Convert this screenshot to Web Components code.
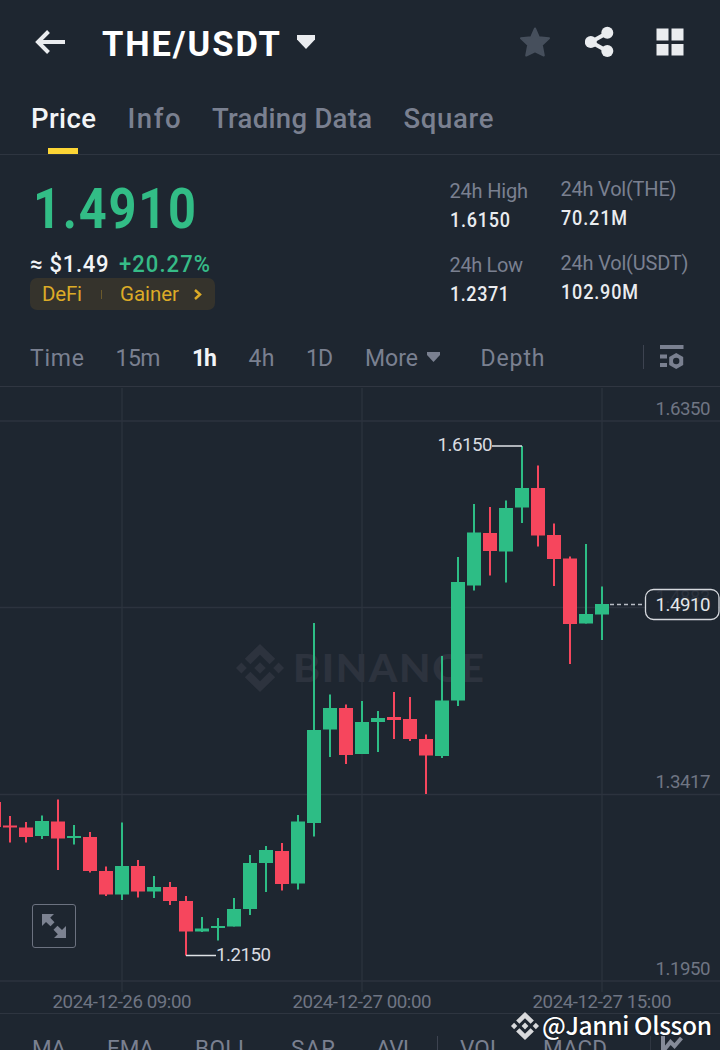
<!DOCTYPE html>
<html lang="en">
<head>
<meta charset="utf-8">
<title>THE/USDT</title>
<style>
    html, body {
        margin: 0;
        padding: 0;
        background: #1e2630;
    }
    body {
        width: 720px;
        height: 1050px;
        overflow: hidden;
        font-family: Roboto, "Liberation Sans", sans-serif;
        color: #7a8090;
    }
</style>
</head>
<body>
<market-page></market-page>

<script>
// a line of text tracked out (or in) to the given width,
// "squeeze" narrows (or widens) the letters themselves
class TrackedText extends HTMLElement {
    constructor() {
        super();
        this.shadowDOM = this.attachShadow({mode: "open"});
        this.shadowDOM.innerHTML = `
        <style>
         :host {
             display: block;
             flex: none;
             white-space: nowrap;
         }
         span {
             display: inline-block;
             transform-origin: 0 50%;
         }
        </style>
        <span><slot></slot></span>`;
    }

    connectedCallback() {
        const width = Number(this.getAttribute("width"));
        const squeeze = Number(this.getAttribute("squeeze") || 1);
        const span = this.shadowDOM.querySelector("span");
        const count = this.textContent.length;
        const natural = span.getBoundingClientRect().width;
        span.style.letterSpacing = `${(width / squeeze - natural) / (count - 1)}px`;
        if (squeeze !== 1) {
            span.style.transform = `scaleX(${squeeze})`;
        }
        this.style.width = `${width}px`;
    }
}

class BinanceLogo extends HTMLElement {
    constructor() {
        super();
        this.attachShadow({mode: "open"}).innerHTML = `
        <style>
         :host {
             display: block;
             flex: none;
         }
         svg {
             display: block;
             width: 100%;
             height: 100%;
         }
        </style>
        <svg viewBox="0 0 48 48" fill="currentColor">
            <path d="M24 0 39.2 14.7 33.6 20.2 24 10.7 14.4 20.2 8.8 14.7Z"/>
            <path d="M24 48 39.2 33.3 33.6 27.8 24 37.3 14.4 27.8 8.8 33.3Z"/>
            <path d="M5.4 18.6 10.8 24 5.4 29.4 0 24Z"/>
            <path d="M42.6 18.6 48 24 42.6 29.4 37.2 24Z"/>
            <path d="M24 18.2 29.8 24 24 29.8 18.2 24Z"/>
        </svg>`;
    }
}

class PairHeader extends HTMLElement {
    constructor() {
        super();
        this.attachShadow({mode: "open"}).innerHTML = `
        <style>
         :host {
             display: flex;
             align-items: center;
             box-sizing: border-box;
             height: 84px;
             padding: 0 36px 0 35px;
             color: #eaecef;
         }
         svg {
             display: block;
             flex: none;
         }
         .title {
             margin: 4px 17px 0 37px;
             font-size: 34.5px;
             font-weight: 700;
             line-height: 40px;
             color: #fff;
         }
         .actions {
             display: flex;
             align-items: center;
             gap: 34px;
             margin-left: auto;
         }
        </style>
        <svg width="30" height="24" viewBox="0 0 30 24" fill="none" stroke="currentColor" stroke-width="4">
            <path d="M3 12H30M13.5 1.5 3 12 13.5 22.5"/>
        </svg>
        <tracked-text class="title" width="178">THE/USDT</tracked-text>
        <svg width="18" height="14" viewBox="0 0 18 14" fill="currentColor">
            <path d="M0 0H18V4.500L9 14 0 4.500Z"/>
        </svg>
        <div class="actions">
            <svg width="32" height="32" viewBox="0 0 32 32" fill="#464f5c" stroke="#464f5c" stroke-width="2" stroke-linejoin="round">
                <path d="M16 2.500 19.800 11.200 30 12.200 22.800 19 24.800 29.500 16 25.300 7.200 29.500 9.200 19 2 12.200 12.200 11.200Z"/>
            </svg>
            <svg width="30" height="32" viewBox="0 0 30 32" fill="currentColor">
                <path d="M22 7 6 16 22 25" fill="none" stroke="currentColor" stroke-width="4"/>
                <circle cx="22.300" cy="6.800" r="6"/>
                <circle cx="5.800" cy="16" r="6"/>
                <circle cx="22.300" cy="25" r="6"/>
            </svg>
            <svg width="28" height="28" viewBox="0 0 28 28" fill="currentColor" style="margin-left: 7px">
                <path d="M.5.500H12.500V12.500H.5ZM15.500 .5H27.500V12.500H15.500ZM.5 16H12.500V27.500H.5ZM15.500 16H27.500V27.500H15.500Z"/>
            </svg>
        </div>`;
    }
}

class PageTabs extends HTMLElement {
    constructor() {
        super();
        this.attachShadow({mode: "open"}).innerHTML = `
        <style>
         :host {
             display: flex;
             gap: 31.5px;
             box-sizing: border-box;
             height: 71px;
             padding: 19px 31px 0;
             border-bottom: 1px solid #2e3540;
             font-size: 27.5px;
             font-weight: 500;
             line-height: 32px;
         }
         .active {
             color: #f2f4f7;
         }
         .active::after {
             content: "";
             display: block;
             width: 30px;
             height: 6px;
             margin: 13px 0 0 17px;
             background: #fcd535;
         }
         .tab {
             flex: none;
         }
        </style>
        <div class="tab active"><tracked-text width="65">Price</tracked-text></div>
        <div class="tab"><tracked-text width="53">Info</tracked-text></div>
        <div class="tab"><tracked-text width="160">Trading Data</tracked-text></div>
        <div class="tab"><tracked-text width="90">Square</tracked-text></div>`;
    }
}

class PriceTicker extends HTMLElement {
    constructor() {
        super();
        this.attachShadow({mode: "open"}).innerHTML = `
        <style>
         :host {
             display: flex;
             box-sizing: border-box;
             height: 174px;
             padding: 20px 0 0 30px;
         }
         .price {
             width: 419.5px;
         }
         .last {
             margin: 10px 0 17px 3px;
             font-size: 56px;
             font-weight: 700;
             line-height: 48px;
             color: #32bd86;
         }
         .quote {
             display: flex;
             gap: 10.5px;
             font-size: 23.2px;
             font-weight: 500;
             line-height: 28px;
             color: #f2f4f7;
         }
         .up {
             color: #36bb87;
         }
         .tags {
             display: flex;
             align-items: center;
             box-sizing: border-box;
             width: 185px;
             height: 32px;
             padding-left: 12px;
             border-radius: 7px;
             background: #35332c;
             font-size: 20.5px;
             color: #dcab27;
         }
         .tags i {
             width: 1px;
             height: 9px;
             margin: 0 18px 0 19px;
             background: #6b5a2c;
         }
         .tags svg {
             margin-left: 15px;
         }
         .stats {
             display: flex;
             flex-direction: column;
             gap: 16px;
             width: 111px;
             padding-top: 2px;
         }
         .stats.volume {
             padding-top: 0;
         }
         .stat {
             font-size: 20px;
             line-height: 29px;
         }
         .stat b {
             font-weight: 500;
             color: #eaecef;
         }
        </style>
        <div class="price">
            <tracked-text class="last" width="163" squeeze=".87">1.4910</tracked-text>
            <div class="quote">
                <tracked-text width="78.5" squeeze=".95">≈ $1.49</tracked-text>
                <tracked-text class="up" width="91" squeeze=".95">+20.27%</tracked-text>
            </div>
            <div class="tags">
                <tracked-text width="40">DeFi</tracked-text>
                <i></i>
                <tracked-text width="59">Gainer</tracked-text>
                <svg width="8" height="11" viewBox="0 0 8 11" fill="none" stroke="currentColor" stroke-width="2.500">
                    <path d="M1 1 6 5.500 1 10"/>
                </svg>
            </div>
        </div>
        <div class="stats">
            <div class="stat">
                <tracked-text width="78.5">24h High</tracked-text>
                <b><tracked-text width="60" squeeze=".9">1.6150</tracked-text></b>
            </div>
            <div class="stat">
                <tracked-text width="73.5">24h Low</tracked-text>
                <b><tracked-text width="59" squeeze=".9">1.2371</tracked-text></b>
            </div>
        </div>
        <div class="stats volume">
            <div class="stat">
                <tracked-text width="116">24h Vol(THE)</tracked-text>
                <b><tracked-text width="66" squeeze=".9">70.21M</tracked-text></b>
            </div>
            <div class="stat">
                <tracked-text width="128">24h Vol(USDT)</tracked-text>
                <b><tracked-text width="77" squeeze=".9">102.90M</tracked-text></b>
            </div>
        </div>`;
    }
}

class IntervalBar extends HTMLElement {
    constructor() {
        super();
        this.attachShadow({mode: "open"}).innerHTML = `
        <style>
         :host {
             display: flex;
             align-items: center;
             gap: 31.5px;
             box-sizing: border-box;
             height: 58px;
             padding: 2px 36px 0 30px;
             border-bottom: 1px solid #303641;
             font-size: 23px;
             line-height: 28px;
         }
         .active {
             font-weight: 700;
             color: #f2f4f7;
         }
         .more {
             display: flex;
             align-items: center;
             gap: 9px;
             margin: 0 9px 0 .5px;
         }
         .more svg {
             margin-top: -4px;
         }
         .settings {
             display: flex;
             align-items: center;
             gap: 16px;
             margin: -3px 0 0 auto;
         }
         .settings i {
             width: 1px;
             height: 24px;
             background: #3d4350;
         }
         svg {
             display: block;
         }
        </style>
        <tracked-text width="54">Time</tracked-text>
        <tracked-text width="45">15m</tracked-text>
        <tracked-text class="active" width="25">1h</tracked-text>
        <tracked-text width="26">4h</tracked-text>
        <tracked-text width="27">1D</tracked-text>
        <div class="more">
            <tracked-text width="53">More</tracked-text>
            <svg width="13" height="10" viewBox="0 0 13 10" fill="currentColor">
                <path d="M0 0H13V3L6.500 10 0 3Z"/>
            </svg>
        </div>
        <tracked-text width="64">Depth</tracked-text>
        <div class="settings">
            <i></i>
            <svg width="24" height="24" viewBox="0 0 24 24" fill="currentColor">
                <path d="M0 0H23.500V4H0ZM0 9.500H7V13.500H0ZM0 18H7V22H0Z"/>
                <path fill-rule="evenodd" d="M16.200 8 23.200 12V20L16.200 24 9.200 20V12ZM16.200 12.800A3.200 3.200 0 1 0 16.200 19.200 3.200 3.200 0 1 0 16.200 12.800Z"/>
            </svg>
        </div>`;
    }
}

// x, high, body top, body bottom, low, rising
const candles = [
    [-6, 802, 802, 827, 827, 0],
    [10, 816, 825.5, 827.5, 842.5, 0],
    [26, 822, 827.5, 837, 842.5, 0],
    [42, 815.5, 821, 836, 839, 1],
    [58, 799.5, 821.5, 838.5, 870, 0],
    [74, 825, 836, 838, 844.5, 1],
    [90, 832, 837, 871, 872.5, 0],
    [106, 866.5, 871, 894.5, 896, 0],
    [122, 822.5, 866, 894.5, 900, 1],
    [138, 860, 866, 891.5, 897.5, 0],
    [154, 876, 887, 891.5, 898, 1],
    [170, 882, 887, 901, 905, 0],
    [186, 896, 901, 931.5, 955.5, 0],
    [202, 917, 928.5, 931.5, 932, 1],
    [218, 918, 926, 928, 940.5, 1],
    [234, 898, 909, 926.5, 926.5, 1],
    [250, 855, 863, 909, 915, 1],
    [266, 846, 850, 863, 892, 1],
    [282, 843, 851, 884, 890.5, 0],
    [298, 815, 821.5, 883.5, 889.5, 1],
    [314, 623, 730, 823, 836.5, 1],
    [330, 694.5, 708, 729.5, 757, 1],
    [346, 704.5, 708, 755, 764, 0],
    [362, 701, 722, 754, 754, 1],
    [378, 711, 718, 722, 752, 1],
    [394, 692, 717, 720, 739, 0],
    [410, 697, 719, 739, 741, 0],
    [426, 734.5, 739, 755.5, 794, 0],
    [442, 656, 700.5, 756, 758, 1],
    [458, 557, 582, 700.5, 706, 1],
    [474, 504, 532.5, 585.5, 590.5, 1],
    [490, 507, 533, 551, 575.5, 0],
    [506, 500.5, 508, 551.5, 582.5, 1],
    [522, 446, 488, 507.5, 523, 1],
    [538, 465.5, 488, 535.5, 546.5, 0],
    [554, 523.5, 535, 559, 586, 0],
    [570, 556.5, 558.5, 624, 664, 0],
    [586, 544, 614, 623.5, 623.5, 1],
    [602, 586.5, 604, 614.5, 640, 1]
];

class CandleChart extends HTMLElement {
    constructor() {
        super();
        this.shadowDOM = this.attachShadow({mode: "open"});
        this.render();
    }

    render() {
        const bars = candles.map(([x, high, top, bottom, low, up]) => `
            <path d="M${x} ${high}V${low}" stroke="${up ? "#2dbd85" : "#f6465d"}" stroke-width="2"/>
            <rect x="${x - 7}" y="${top}" width="14" height="${bottom - top}" fill="${up ? "#2dbd85" : "#f6465d"}"/>`).join("");

        this.shadowDOM.innerHTML = `
        <style>
         :host {
             display: block;
             position: relative;
             height: 626px;
             border-bottom: 1px solid #2e3540;
         }
         svg {
             display: block;
         }
         text {
             font-size: 18.7px;
         }
         .watermark {
             position: absolute;
             left: 236px;
             top: 257px;
             display: flex;
             align-items: center;
             gap: 9px;
             color: #2d333e;
             font-family: Lato, sans-serif;
             font-size: 37px;
             font-weight: 900;
             line-height: 48px;
         }
         .watermark binance-logo {
             width: 48px;
             height: 48px;
         }
         .bars {
             position: absolute;
             left: 0;
             top: 0;
         }
         .expand {
             position: absolute;
             left: 32px;
             top: 517px;
             display: grid;
             place-items: center;
             box-sizing: border-box;
             width: 44px;
             height: 44px;
             border: 1px solid #6c7280;
             border-radius: 3px;
         }
        </style>
        <svg width="720" height="626" viewBox="0 387 720 626">
            <path d="M0 421H720M0 607.500H720M0 794.500H720M0 981H720M122 388V992M362 388V992M602 388V992" stroke="#2c333e" stroke-width="1.300"/>
        </svg>
        <div class="watermark">
            <binance-logo></binance-logo>
            <tracked-text width="191" squeeze="1.1">BINANCE</tracked-text>
        </div>
        <svg class="bars" width="720" height="626" viewBox="0 387 720 626">
            ${bars}
            <path d="M492 446H522M186 955.500H216" stroke="#dfe2e6" stroke-width="1.300"/>
            <path d="M610 604.500H645" stroke="#b8bcc4" stroke-width="1.300" stroke-dasharray="4 3"/>
            <g fill="#d9dce1">
                <text x="437.500" y="451" textLength="55">1.6150</text>
                <text x="216" y="961" textLength="55">1.2150</text>
            </g>
            <g fill="#6f7583">
                <text x="655.500" y="415" textLength="55">1.6350</text>
                <text x="655.500" y="788" textLength="55">1.3417</text>
                <text x="655.500" y="975" textLength="55">1.1950</text>
                <text x="52.500" y="1008" textLength="139">2024-12-26 09:00</text>
                <text x="292.500" y="1008" textLength="139">2024-12-27 00:00</text>
                <text x="532.500" y="1008" textLength="139">2024-12-27 15:00</text>
            </g>
            <rect x="646" y="590" width="72" height="29" rx="8" fill="#1e2630"/>
            <text x="655.500" y="603" textLength="55" fill="#2c323d">1.4883</text>
            <rect x="645.500" y="589.500" width="73.500" height="30" rx="8" fill="none" stroke="#d5d8dd" stroke-width="1.300"/>
            <text x="655.500" y="611" textLength="55" fill="#e4e6ea">1.4910</text>
        </svg>
        <div class="expand">
            <svg width="26" height="26" viewBox="0 0 26 26" fill="#7c8291">
                <path d="M1 1H13L9.200 4.800 13.500 9.300 9.500 13.200 5 9 1 13Z"/>
                <path d="M25 25H13L16.800 21.200 12.500 16.700 16.500 12.800 21 17 25 13Z"/>
            </svg>
        </div>`;
    }
}

class IndicatorBar extends HTMLElement {
    constructor() {
        super();
        this.attachShadow({mode: "open"}).innerHTML = `
        <style>
         :host {
             display: flex;
             align-items: flex-start;
             box-sizing: border-box;
             height: 36px;
             padding: 22px 0 0 32px;
             overflow: hidden;
             font-size: 22.5px;
             line-height: 24px;
         }
         tracked-text {
             margin-right: 41px;
         }
         i {
             width: 1px;
             height: 24px;
             margin: 0 22px 0 -19px;
             background: #3d4350;
         }
         i.last {
             margin: 0 10px 0 2px;
             background: #2f3641;
         }
        </style>
        <tracked-text width="34">MA</tracked-text>
        <tracked-text width="47">EMA</tracked-text>
        <tracked-text width="55">BOLL</tracked-text>
        <tracked-text width="44">SAR</tracked-text>
        <tracked-text width="39">AVL</tracked-text>
        <i></i>
        <tracked-text width="42">VOL</tracked-text>
        <tracked-text width="64">MACD</tracked-text>
        <i class="last"></i>
        <svg width="22" height="24" viewBox="0 0 22 24" fill="none" stroke="#858b99" stroke-width="4">
            <path d="M2 0V22H22M3 14 9.500 6 13.500 10 20.500 2"/>
        </svg>`;
    }
}

class AuthorBadge extends HTMLElement {
    constructor() {
        super();
        this.attachShadow({mode: "open"});
    }

    connectedCallback() {
        this.shadowRoot.innerHTML = `
        <style>
         :host {
             position: absolute;
             left: 511px;
             top: 1008px;
             display: flex;
             align-items: center;
             gap: 3px;
             height: 36px;
             color: #fff;
             font-family: "Noto Sans CJK SC", "Noto Sans", sans-serif;
             font-size: 24.5px;
             font-weight: 500;
             line-height: 36px;
             text-shadow: 0 0 2px rgba(0, 0, 0, 0.6);
         }
         binance-logo {
             width: 28px;
             height: 28px;
             color: #d9dadc;
         }
         tracked-text {
             margin-top: -2px;
         }
        </style>
        <binance-logo></binance-logo>
        <tracked-text width="170">${this.getAttribute("name")}</tracked-text>`;
    }
}

class MarketPage extends HTMLElement {
    constructor() {
        super();
        this.attachShadow({mode: "open"}).innerHTML = `
        <style>
         :host {
             display: block;
             position: relative;
             width: 720px;
             height: 1050px;
             overflow: hidden;
         }
        </style>
        <pair-header></pair-header>
        <page-tabs></page-tabs>
        <price-ticker></price-ticker>
        <interval-bar></interval-bar>
        <candle-chart></candle-chart>
        <indicator-bar></indicator-bar>
        <author-badge name="@Janni Olsson"></author-badge>`;
    }
}

customElements.define("tracked-text", TrackedText);
customElements.define("binance-logo", BinanceLogo);
customElements.define("pair-header", PairHeader);
customElements.define("page-tabs", PageTabs);
customElements.define("price-ticker", PriceTicker);
customElements.define("interval-bar", IntervalBar);
customElements.define("candle-chart", CandleChart);
customElements.define("indicator-bar", IndicatorBar);
customElements.define("author-badge", AuthorBadge);
customElements.define("market-page", MarketPage);
</script>
</body>
</html>
